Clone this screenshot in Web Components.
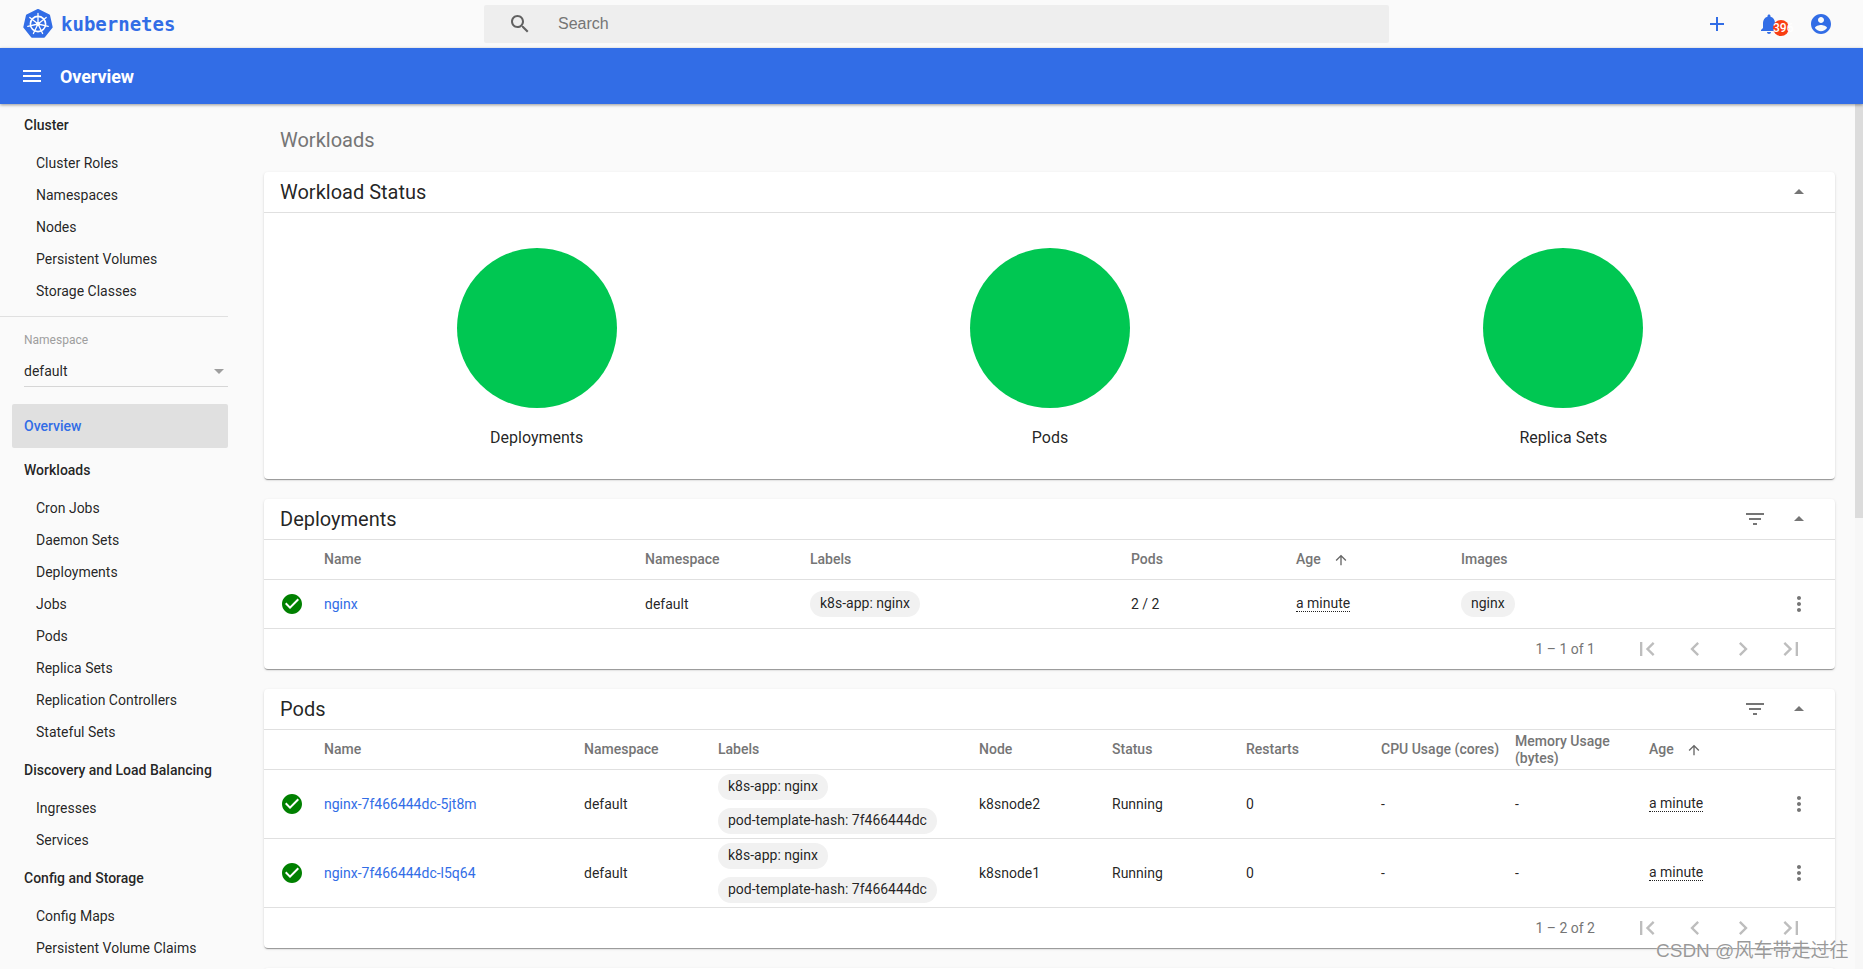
<!DOCTYPE html>
<html lang="en">
<head>
<meta charset="utf-8">
<title>Overview - Kubernetes Dashboard</title>
<style>
  html, body { margin: 0; height: 100%; overflow: hidden; }
  body { font: 14px/20px Roboto, "Liberation Sans", sans-serif; color: rgba(0,0,0,.87); background: #fafafa; }
</style>
</head>
<body>
<kd-app>
  <kd-toolbar></kd-toolbar>
  <kd-actionbar>Overview</kd-actionbar>

  <kd-nav slot="nav">
    <kd-nav-head>Cluster</kd-nav-head>
    <kd-nav-item>Cluster Roles</kd-nav-item>
    <kd-nav-item>Namespaces</kd-nav-item>
    <kd-nav-item>Nodes</kd-nav-item>
    <kd-nav-item>Persistent Volumes</kd-nav-item>
    <kd-nav-item>Storage Classes</kd-nav-item>
    <kd-ns-select></kd-ns-select>
    <kd-nav-item active>Overview</kd-nav-item>
    <kd-nav-head>Workloads</kd-nav-head>
    <kd-nav-item>Cron Jobs</kd-nav-item>
    <kd-nav-item>Daemon Sets</kd-nav-item>
    <kd-nav-item>Deployments</kd-nav-item>
    <kd-nav-item>Jobs</kd-nav-item>
    <kd-nav-item>Pods</kd-nav-item>
    <kd-nav-item>Replica Sets</kd-nav-item>
    <kd-nav-item>Replication Controllers</kd-nav-item>
    <kd-nav-item>Stateful Sets</kd-nav-item>
    <kd-nav-head>Discovery and Load Balancing</kd-nav-head>
    <kd-nav-item>Ingresses</kd-nav-item>
    <kd-nav-item>Services</kd-nav-item>
    <kd-nav-head>Config and Storage</kd-nav-head>
    <kd-nav-item>Config Maps</kd-nav-item>
    <kd-nav-item>Persistent Volume Claims</kd-nav-item>
  </kd-nav>

  <kd-main slot="main">
    <kd-card title="Workload Status" plain>
      <kd-status-grid>
        <kd-status>Deployments</kd-status>
        <kd-status>Pods</kd-status>
        <kd-status>Replica Sets</kd-status>
      </kd-status-grid>
    </kd-card>

    <kd-card title="Deployments" style="--cols:60px 321px 165px 321px 165px 165px 1fr 72px">
      <kd-row head>
        <kd-cell></kd-cell><kd-cell>Name</kd-cell><kd-cell>Namespace</kd-cell><kd-cell>Labels</kd-cell><kd-cell>Pods</kd-cell>
        <kd-cell><kd-sort>Age</kd-sort></kd-cell>
        <kd-cell>Images</kd-cell><kd-cell></kd-cell>
      </kd-row>
      <kd-row style="--row-h:49px">
        <kd-cell><kd-check></kd-check></kd-cell>
        <kd-cell><kd-link>nginx</kd-link></kd-cell>
        <kd-cell>default</kd-cell>
        <kd-cell><kd-chip>k8s-app: nginx</kd-chip></kd-cell>
        <kd-cell>2 / 2</kd-cell>
        <kd-cell><kd-age>a minute</kd-age></kd-cell>
        <kd-cell><kd-chip>nginx</kd-chip></kd-cell>
        <kd-cell><kd-icon name="more" color="#757575"></kd-icon></kd-cell>
      </kd-row>
      <kd-paginator>1 – 1 of 1</kd-paginator>
    </kd-card>

    <kd-card title="Pods" style="--cols:60px 260px 134px 261px 133px 134px 135px 134px 134px 1fr 72px">
      <kd-row head>
        <kd-cell></kd-cell><kd-cell>Name</kd-cell><kd-cell>Namespace</kd-cell><kd-cell>Labels</kd-cell><kd-cell>Node</kd-cell>
        <kd-cell>Status</kd-cell><kd-cell>Restarts</kd-cell><kd-cell>CPU Usage (cores)</kd-cell><kd-cell>Memory Usage (bytes)</kd-cell>
        <kd-cell><kd-sort>Age</kd-sort></kd-cell>
        <kd-cell></kd-cell>
      </kd-row>
      <kd-row style="--row-h:69px">
        <kd-cell><kd-check></kd-check></kd-cell>
        <kd-cell><kd-link>nginx-7f466444dc-5jt8m</kd-link></kd-cell>
        <kd-cell>default</kd-cell>
        <kd-cell><kd-chip>k8s-app: nginx</kd-chip><kd-chip>pod-template-hash: 7f466444dc</kd-chip></kd-cell>
        <kd-cell>k8snode2</kd-cell><kd-cell>Running</kd-cell><kd-cell>0</kd-cell><kd-cell>-</kd-cell><kd-cell>-</kd-cell>
        <kd-cell><kd-age>a minute</kd-age></kd-cell>
        <kd-cell><kd-icon name="more" color="#757575"></kd-icon></kd-cell>
      </kd-row>
      <kd-row style="--row-h:69px">
        <kd-cell><kd-check></kd-check></kd-cell>
        <kd-cell><kd-link>nginx-7f466444dc-l5q64</kd-link></kd-cell>
        <kd-cell>default</kd-cell>
        <kd-cell><kd-chip>k8s-app: nginx</kd-chip><kd-chip>pod-template-hash: 7f466444dc</kd-chip></kd-cell>
        <kd-cell>k8snode1</kd-cell><kd-cell>Running</kd-cell><kd-cell>0</kd-cell><kd-cell>-</kd-cell><kd-cell>-</kd-cell>
        <kd-cell><kd-age>a minute</kd-age></kd-cell>
        <kd-cell><kd-icon name="more" color="#757575"></kd-icon></kd-cell>
      </kd-row>
      <kd-paginator>1 – 2 of 2</kd-paginator>
    </kd-card>

    <kd-card plain></kd-card>
  </kd-main>
</kd-app>

<script>
const BLUE = '#326de6';

const ICONS = {
  menu: 'M3 18h18v-2H3v2zm0-5h18v-2H3v2zm0-7v2h18V6H3z',
  search: 'M15.5 14h-.79l-.28-.27C15.41 12.59 16 11.11 16 9.5 16 5.91 13.09 3 9.5 3S3 5.91 3 9.5 5.91 16 9.5 16c1.61 0 3.09-.59 4.23-1.57l.27.28v.79l5 4.99L20.49 19l-4.99-5zm-6 0C7.01 14 5 11.99 5 9.5S7.01 5 9.5 5 14 7.01 14 9.5 11.99 14 9.5 14z',
  add: 'M19 13h-6v6h-2v-6H5v-2h6V5h2v6h6v2z',
  bell: 'M12 22c1.1 0 2-.9 2-2h-4c0 1.1.89 2 2 2zm6-6v-5c0-3.07-1.64-5.64-4.5-6.32V4c0-.83-.67-1.5-1.5-1.5s-1.5.67-1.5 1.5v.68C7.63 5.36 6 7.92 6 11v5l-2 2v1h16v-1l-2-2z',
  account: 'M12 2C6.48 2 2 6.48 2 12s4.48 10 10 10 10-4.48 10-10S17.52 2 12 2zm0 3c1.66 0 3 1.34 3 3s-1.34 3-3 3-3-1.34-3-3 1.34-3 3-3zm0 14.2c-2.5 0-4.71-1.28-6-3.22.03-1.99 4-3.08 6-3.08 1.99 0 5.97 1.09 6 3.08-1.29 1.94-3.5 3.22-6 3.22z',
  filter: 'M10 18h4v-2h-4v2zM3 6v2h18V6H3zm3 7h12v-2H6v2z',
  dropup: 'M7 14l5-5 5 5z',
  dropdown: 'M7 10l5 5 5-5z',
  up: 'M4 12l1.41 1.41L11 7.83V20h2V7.83l5.58 5.59L20 12l-8-8-8 8z',
  more: 'M12 8c1.1 0 2-.9 2-2s-.9-2-2-2-2 .9-2 2 .9 2 2 2zm0 2c-1.1 0-2 .9-2 2s.9 2 2 2 2-.9 2-2-.9-2-2-2zm0 6c-1.1 0-2 .9-2 2s.9 2 2 2 2-.9 2-2-.9-2-2-2z',
  check: 'M12 2C6.48 2 2 6.48 2 12s4.48 10 10 10 10-4.48 10-10S17.52 2 12 2zm-2 15l-5-5 1.41-1.41L10 14.17l7.59-7.59L19 8l-9 9z',
  first: 'M18.41 16.59L13.82 12l4.59-4.59L17 6l-6 6 6 6zM6 6h2v12H6z',
  prev: 'M15.41 7.41L14 6l-6 6 6 6 1.41-1.41L10.83 12z',
  next: 'M10 6L8.59 7.41 13.17 12l-4.58 4.59L10 18l6-6z',
  last: 'M5.59 7.41L10.18 12l-4.59 4.59L7 18l6-6-6-6zM16 6h2v12h-2z'
};

// small helper so every element below stays a few lines
function comp(tag, css, html, setup) {
  customElements.define(tag, class extends HTMLElement {
    constructor() {
      super();
      this.attachShadow({ mode: 'open' }).innerHTML = `<style>${css}</style>${typeof html === 'function' ? html(this) : html}`;
    }
    connectedCallback() { if (setup) setup(this); }
  });
}

class KdIcon extends HTMLElement {
  constructor() { super(); this.attachShadow({ mode: 'open' }); }
  connectedCallback() {
    const size = this.getAttribute('size') || 24;
    const color = this.getAttribute('color') || 'currentColor';
    this.shadowRoot.innerHTML = `
      <style>:host { display: inline-block; width: ${size}px; height: ${size}px; line-height: 0; } svg { display: block; }</style>
      <svg width="${size}" height="${size}" viewBox="0 0 24 24" fill="${color}"><path d="${ICONS[this.getAttribute('name')]}"/></svg>`;
  }
}
customElements.define('kd-icon', KdIcon);

comp('kd-app', `
  :host { display: grid; grid-template-columns: 228px 1fr 8px; grid-template-rows: 48px 56px 865px; height: 969px; position: relative; overflow: hidden; }
  ::slotted(kd-toolbar), ::slotted(kd-actionbar) { grid-column: 1 / -1; }
  .bar { background: #f7f7f7; }
  .thumb { height: 414px; background: #dcdcdc; }
  .mark { position: absolute; left: 1656px; top: 938px; font: 19px/26px "Liberation Sans", "Noto Sans CJK SC", sans-serif; color: rgba(120,120,120,.75); text-shadow: 0 0 1px #fff; white-space: nowrap; }
`, `
  <slot></slot>
  <slot name="nav"></slot>
  <slot name="main"></slot>
  <div class="bar"><div class="thumb"></div></div>
  <div class="mark">CSDN @风车带走过往</div>
`);

comp('kd-toolbar', `
  :host { display: flex; align-items: center; height: 48px; background: #fafafa; color: ${BLUE}; }
  .logo { display: flex; align-items: center; width: 484px; padding-left: 22px; box-sizing: border-box; gap: 7px; }
  .name { font: 600 19px/24px "DejaVu Sans Mono", monospace; }
  .search { display: flex; align-items: center; width: 905px; height: 38px; background: #eee; border-radius: 2px; color: #757575; font: 16px "Liberation Sans", sans-serif; }
  .search kd-icon { margin: 0 26px 0 24px; }
  .tools { flex: 1; display: flex; align-items: center; padding-left: 316px; }
  .bell { position: relative; margin-left: 28px; height: 24px; }
  .badge { position: absolute; left: 16px; top: 8px; width: 16px; height: 16px; border-radius: 50%; background: #f93d12; color: #fff; font: 500 12px/16px Roboto, sans-serif; white-space: nowrap; }
  .acct { margin-left: 28px; }
`, `
  <div class="logo">
    <svg width="32" height="32" viewBox="0 0 32 32">
      <path d="M16 2 27 7.3 29.7 19.2 22.1 28.7 9.9 28.7 2.3 19.2 5 7.3Z" fill="${BLUE}" stroke="${BLUE}" stroke-width="2" stroke-linejoin="round"/>
      <g fill="none" stroke="#fff" stroke-linecap="round">
        <circle cx="16" cy="16" r="7.6" stroke-width="1.6"/>
        <path stroke-width="1.3" d="M16 16V5.5M16 16 24.2 9.5M16 16 26.2 18.3M16 16 20.6 25.5M16 16 11.4 25.5M16 16 5.8 18.3M16 16 7.8 9.5"/>
      </g>
      <circle cx="16" cy="16" r="2" fill="#fff"/>
    </svg>
    <span class="name">kubernetes</span>
  </div>
  <div class="search"><kd-icon name="search" color="#616161"></kd-icon><span>Search</span></div>
  <div class="tools">
    <kd-icon name="add"></kd-icon>
    <div class="bell"><kd-icon name="bell"></kd-icon><span class="badge">396</span></div>
    <kd-icon class="acct" name="account"></kd-icon>
  </div>
`);

comp('kd-actionbar', `
  :host { display: flex; align-items: center; gap: 16px; height: 56px; padding-left: 20px; background: ${BLUE}; color: #fff; font: 700 18px Roboto, sans-serif; letter-spacing: -.1px; box-shadow: 0 1px 3px rgba(0,0,0,.4); position: relative; z-index: 2; }
`, `<kd-icon name="menu"></kd-icon><slot></slot>`);

comp('kd-nav', `
  :host { display: block; padding-top: 5px; overflow: hidden; }
`, `<slot></slot>`);

comp('kd-nav-head', `
  :host { display: block; height: 32px; line-height: 32px; padding-left: 24px; margin: 6px 0; font-weight: 500; white-space: nowrap; }
  :host(:first-child) { margin-top: 0; }
`, `<slot></slot>`);

comp('kd-nav-item', `
  :host { display: block; height: 32px; line-height: 32px; padding-left: 36px; white-space: nowrap; }
  :host([active]) { height: 44px; line-height: 44px; margin: 0 0 0 12px; padding-left: 12px; background: #e0e0e0; border-radius: 2px; color: ${BLUE}; font-weight: 500; }
`, `<slot></slot>`);

comp('kd-ns-select', `
  :host { display: block; margin-top: 9px; border-top: 1px solid #e0e0e0; padding: 14px 0 17px 24px; }
  .label { font-size: 12px; line-height: 18px; color: #9e9e9e; }
  .value { display: flex; justify-content: space-between; align-items: center; height: 38px; padding-top: 6px; box-sizing: border-box; border-bottom: 1px solid #d6d6d6; }
  kd-icon { margin-right: -3px; }
`, `<div class="label">Namespace</div><div class="value"><span>default</span><kd-icon name="dropdown" color="#9e9e9e"></kd-icon></div>`);

comp('kd-main', `
  :host { display: flex; flex-direction: column; gap: 20px; padding: 0 20px 0 36px; overflow: hidden; }
  h2 { margin: 20px 0 -4px 16px; font: 400 20px/32px Roboto, sans-serif; color: #757575; }
`, `<h2>Workloads</h2><slot></slot>`);

comp('kd-card', `
  :host { display: block; flex: none; background: #fff; border-radius: 4px; box-shadow: 0 2px 1px -1px rgba(0,0,0,.25), 0 1px 1px 0 rgba(0,0,0,.14), 0 1px 3px 0 rgba(0,0,0,.12); }
  .head { display: flex; align-items: center; height: 41px; box-sizing: border-box; border-bottom: 1px solid #e0e0e0; padding: 0 24px 0 16px; font: 400 20px/24px Roboto, sans-serif; color: rgba(0,0,0,.87); }
  .title { flex: 1; }
  .tools { display: flex; gap: 20px; }
`, c => {
  const t = c.getAttribute('title');
  if (t === null) return `<div class="head" style="border:0"></div>`;
  const filter = c.hasAttribute('plain') ? '' : '<kd-icon name="filter" color="#757575"></kd-icon>';
  return `<div class="head"><span class="title">${t}</span><span class="tools">${filter}<kd-icon name="dropup" color="#757575"></kd-icon></span></div><slot></slot>`;
}, c => c.removeAttribute('title'));

comp('kd-status-grid', `
  :host { display: grid; grid-template-columns: repeat(3, 1fr); padding: 35px 15px 31px 16px; }
`, `<slot></slot>`);

comp('kd-status', `
  :host { display: flex; flex-direction: column; align-items: center; gap: 20px; font-size: 16px; }
  .dot { width: 160px; height: 160px; border-radius: 50%; background: #00c752; }
`, `<div class="dot"></div><div><slot></slot></div>`);

comp('kd-row', `
  :host { display: grid; grid-template-columns: var(--cols); align-items: center; height: var(--row-h, 40px); box-sizing: border-box; border-bottom: 1px solid #e0e0e0; }
  :host([head]) { color: #757575; font-weight: 500; line-height: 17px; }
`, `<slot></slot>`);

comp('kd-cell', `
  :host { display: flex; flex-direction: column; align-items: flex-start; gap: 8px; }
  :host(:first-child) { padding-left: 16px; }
  :host(:last-child) { align-items: flex-end; padding-right: 24px; }
`, `<slot></slot>`);

comp('kd-sort', `
  :host { display: flex; align-items: center; gap: 12px; }
`, `<slot></slot><kd-icon name="up" size="16" color="#666"></kd-icon>`);

comp('kd-check', `:host { display: block; height: 24px; }`, `<kd-icon name="check" color="#008000"></kd-icon>`);
comp('kd-link', `:host { color: ${BLUE}; }`, `<slot></slot>`);
comp('kd-age', `:host { border-bottom: 1px dotted rgba(0,0,0,.87); line-height: 15px; }`, `<slot></slot>`);
comp('kd-chip', `
  :host { display: inline-block; height: 26px; line-height: 24px; padding: 0 10px; border-radius: 13px; background: #f1f1f1; white-space: nowrap; }
`, `<slot></slot>`);

comp('kd-paginator', `
  :host { display: flex; align-items: center; justify-content: flex-end; height: 40px; padding-right: 20px; color: #757575; }
  .range { margin-right: 28px; }
  .btn { display: flex; width: 48px; justify-content: center; }
`, `<span class="range"><slot></slot></span>
  <span class="btn"><kd-icon name="first" size="28" color="#bdbdbd"></kd-icon></span>
  <span class="btn"><kd-icon name="prev" size="28" color="#bdbdbd"></kd-icon></span>
  <span class="btn"><kd-icon name="next" size="28" color="#bdbdbd"></kd-icon></span>
  <span class="btn"><kd-icon name="last" size="28" color="#bdbdbd"></kd-icon></span>`);
</script>
</body>
</html>
